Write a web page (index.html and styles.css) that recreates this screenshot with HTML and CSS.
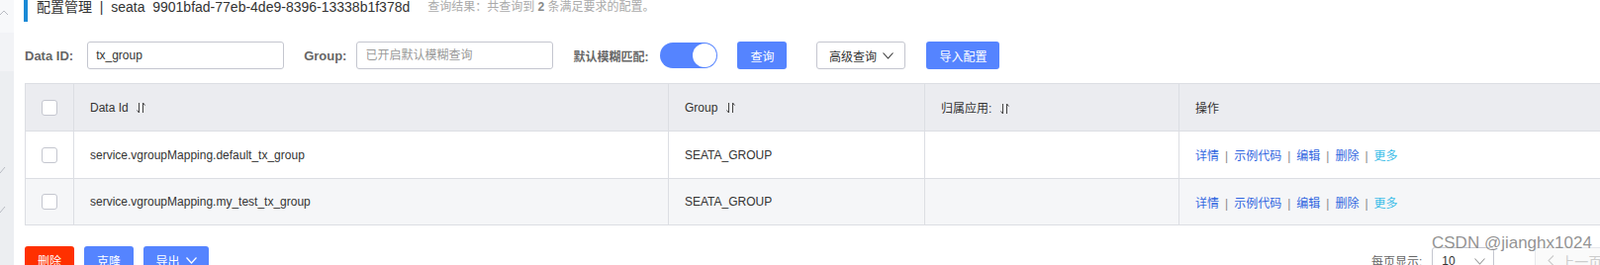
FILE: index.html
```html
<!DOCTYPE html>
<html lang="zh-CN">
<head>
  <meta charset="UTF-8">
  <title>配置管理</title>
  <link rel="stylesheet" href="styles.css">
</head>
<body>

<div class="layout">
  <aside class="sidebar">
    <div class="side-top">
      <svg class="side-arrow" width="8" height="6" viewBox="0 0 8 6"><polyline points="0,5 4,1 8,5" fill="none" stroke="#b8bbc2" stroke-width="1"/></svg>
    </div>
    <div class="side-active"></div>
    <div class="side-rest">
      <svg class="side-chev" width="8" height="8" viewBox="0 0 8 8"><polyline points="-4,2 0,7 5,1" fill="none" stroke="#b8bbc2" stroke-width="1"/></svg>
      <svg class="side-chev second" width="8" height="8" viewBox="0 0 8 8"><polyline points="-4,2 0,7 5,1" fill="none" stroke="#b8bbc2" stroke-width="1"/></svg>
    </div>
  </aside>

  <main class="content">
    <div class="page-title">
      <span class="title-text">配置管理 &nbsp;|&nbsp; seata&nbsp; 9901bfad-77eb-4de9-8396-13338b1f378d</span>
      <span class="title-tip">查询结果：共查询到 <strong>2</strong> 条满足要求的配置。</span>
    </div>

    <div class="filter">
      <label class="lbl lbl-data">Data ID:</label>
      <input class="text-input" type="text" value="tx_group">
      <label class="lbl lbl-group">Group:</label>
      <input class="text-input" type="text" placeholder="已开启默认模糊查询">
      <label class="lbl lbl-fuzzy">默认模糊匹配:</label>
      <span class="switch"><span class="knob"></span></span>
      <button class="btn btn-primary btn-search">查询</button>
      <button class="btn btn-normal btn-advanced">高级查询
        <svg width="11" height="7" viewBox="0 0 11 7"><polyline points="0.5,0.5 5.5,6 10.5,0.5" fill="none" stroke="#333" stroke-width="1.1"/></svg>
      </button>
      <button class="btn btn-primary btn-import">导入配置</button>
    </div>

    <table class="grid">
      <colgroup>
        <col class="c-check">
        <col class="c-id">
        <col class="c-group">
        <col class="c-app">
        <col class="c-ops">
      </colgroup>
      <thead>
        <tr>
          <th class="check-cell"><span class="checkbox"></span></th>
          <th>Data Id <svg class="sort" width="9" height="12" viewBox="0 0 9 12"><path d="M2.5 1V11L0.5 8.5M6.5 11V1L8.5 3.5" fill="none" stroke="#444" stroke-width="1"/></svg></th>
          <th>Group <svg class="sort" width="9" height="12" viewBox="0 0 9 12"><path d="M2.5 1V11L0.5 8.5M6.5 11V1L8.5 3.5" fill="none" stroke="#444" stroke-width="1"/></svg></th>
          <th>归属应用: <svg class="sort" width="9" height="12" viewBox="0 0 9 12"><path d="M2.5 1V11L0.5 8.5M6.5 11V1L8.5 3.5" fill="none" stroke="#444" stroke-width="1"/></svg></th>
          <th>操作</th>
        </tr>
      </thead>
      <tbody>
        <tr>
          <td class="check-cell"><span class="checkbox"></span></td>
          <td>service.vgroupMapping.default_tx_group</td>
          <td>SEATA_GROUP</td>
          <td></td>
          <td class="ops"><a>详情</a><span class="sep">|</span><a>示例代码</a><span class="sep">|</span><a>编辑</a><span class="sep">|</span><a>删除</a><span class="sep">|</span><a class="more">更多</a></td>
        </tr>
        <tr class="stripe">
          <td class="check-cell"><span class="checkbox"></span></td>
          <td>service.vgroupMapping.my_test_tx_group</td>
          <td>SEATA_GROUP</td>
          <td></td>
          <td class="ops"><a>详情</a><span class="sep">|</span><a>示例代码</a><span class="sep">|</span><a>编辑</a><span class="sep">|</span><a>删除</a><span class="sep">|</span><a class="more">更多</a></td>
        </tr>
      </tbody>
    </table>

    <div class="footer">
      <div class="batch">
        <button class="btn btn-danger">删除</button>
        <button class="btn btn-primary">克隆</button>
        <button class="btn btn-primary btn-export">导出
          <svg width="11" height="7" viewBox="0 0 11 7"><polyline points="0.5,0.5 5.5,6 10.5,0.5" fill="none" stroke="#fff" stroke-width="1.2"/></svg>
        </button>
      </div>
      <div class="pager">
        <span class="page-size-label">每页显示:</span>
        <span class="page-size">10
          <svg width="11" height="7" viewBox="0 0 11 7"><polyline points="0.5,0.5 5.5,6 10.5,0.5" fill="none" stroke="#999" stroke-width="1.1"/></svg>
        </span>
        <span class="page-btn disabled">
          <svg width="7" height="11" viewBox="0 0 7 11"><polyline points="6,0.5 1,5.5 6,10.5" fill="none" stroke="#ccc" stroke-width="1.1"/></svg>
          上一页
        </span>
      </div>
    </div>
  </main>
</div>

<div class="watermark">CSDN @jianghx1024</div>

</body>
</html>
```

FILE: styles.css
```css
body {
  margin: 0;
  font-family: "Liberation Sans", "Noto Sans CJK SC", sans-serif;
  font-size: 12px;
  color: #333;
  background: #fff;
  overflow: hidden;
  height: 268px;
}
.layout {
  display: flex;
  align-items: flex-start;
}
.sidebar {
  flex: none;
  width: 14px;
  height: 268px;
  display: flex;
  flex-direction: column;
  overflow: hidden;
}
.side-top {
  height: 33px;
  background: #f7f8fa;
}
.side-arrow {
  display: block;
  margin: 10px 0 0 0;
}
.side-active {
  height: 39px;
  background: #f2f3f6;
}
.side-rest {
  flex: 1;
  background: #eceef1;
}
.side-chev {
  display: block;
  margin-top: 96px;
}
.side-chev.second {
  margin-top: 32px;
}
.content {
  flex: none;
  width: 1722px;
  padding-left: 11px;
}
.page-title {
  margin-top: -8px;
  margin-left: -1px;
  height: 30px;
  line-height: 28px;
  border-left: 4px solid #1a8ad6;
  padding-left: 9px;
  display: flex;
  align-items: center;
}
.title-text {
  font-size: 14px;
  color: #333;
}
.title-tip {
  margin-left: 18px;
  color: #aaa;
  font-size: 12px;
}
.title-tip strong {
  color: #888;
}
.filter {
  margin-top: 20px;
  height: 28px;
  display: flex;
  align-items: center;
}
.lbl {
  font-weight: bold;
  color: #666;
  white-space: nowrap;
}
.lbl-data {
  font-size: 13px;
  margin-right: 14px;
}
.lbl-group {
  font-size: 13px;
  margin-left: 20px;
  margin-right: 10px;
}
.lbl-fuzzy {
  margin-left: 20px;
  margin-right: 12px;
}
.text-input {
  box-sizing: border-box;
  width: 199px;
  height: 28px;
  border: 1px solid #c4c6cf;
  border-radius: 3px;
  padding: 0 8px;
  font-family: inherit;
  font-size: 12px;
  color: #333;
  outline: none;
}
.text-input::placeholder {
  color: #999;
}
.switch {
  width: 58px;
  height: 26px;
  border-radius: 13px;
  background: #5584ff;
  display: flex;
  align-items: center;
  justify-content: flex-end;
  box-sizing: border-box;
  padding-right: 1px;
}
.knob {
  width: 24px;
  height: 24px;
  border-radius: 50%;
  background: #fff;
}
.btn {
  box-sizing: border-box;
  height: 28px;
  padding: 0;
  border: 1px solid transparent;
  border-radius: 3px;
  font-family: inherit;
  font-size: 12px;
  display: inline-flex;
  align-items: center;
  justify-content: center;
  gap: 6px;
  white-space: nowrap;
  cursor: pointer;
}
.btn-primary {
  background: #5584ff;
  color: #fff;
}
.btn-normal {
  background: #fff;
  border-color: #c4c6cf;
  color: #333;
}
.btn-danger {
  background: #ff3000;
  color: #fff;
}
.btn-search {
  margin-left: 20px;
  width: 50px;
}
.btn-advanced {
  margin-left: 30px;
  width: 90px;
}
.btn-import {
  margin-left: 21px;
  width: 74px;
}
.grid {
  margin-top: 14px;
  width: 1711px;
  table-layout: fixed;
  border-collapse: collapse;
}
.c-check { width: 49px; }
.c-id { width: 601px; }
.c-group { width: 259px; }
.c-app { width: 257px; }
.grid th,
.grid td {
  border: 1px solid #dcdee3;
  height: 47px;
  padding: 0 16px;
  text-align: left;
  font-weight: normal;
  color: #333;
  white-space: nowrap;
}
.grid th {
  background: #ebecf0;
  height: 47px;
}
.grid tbody tr:last-child td {
  height: 46px;
}
.grid .check-cell {
  padding: 0;
  text-align: center;
}
.stripe td {
  background: #f5f6f8;
}
.checkbox {
  display: inline-block;
  vertical-align: middle;
  box-sizing: border-box;
  width: 16px;
  height: 16px;
  border: 1px solid #c4c6cf;
  border-radius: 3px;
  background: #fff;
}
.sort {
  vertical-align: -2px;
  margin-left: 5px;
}
.ops a {
  color: #3166e0;
}
.ops a.more {
  color: #3bbde8;
}
.sep {
  margin: 0 6px;
  color: #888;
}
.footer {
  margin-top: 21px;
  display: flex;
  align-items: flex-start;
  justify-content: space-between;
}
.batch {
  display: flex;
  gap: 10px;
}
.batch .btn {
  width: 50px;
}
.batch .btn-export {
  width: 66px;
}
.pager {
  display: flex;
  align-items: center;
  width: 361px;
}
.page-size-label {
  color: #666;
  margin-right: 10px;
}
.page-size {
  box-sizing: border-box;
  width: 63px;
  height: 28px;
  border: 1px solid #c4c6cf;
  border-radius: 3px;
  padding: 0 8px 0 9px;
  display: flex;
  align-items: center;
  justify-content: space-between;
  color: #333;
  margin-top: 1px;
}
.page-btn {
  box-sizing: border-box;
  margin-left: 41px;
  height: 28px;
  width: 90px;
  border: 1px solid #e6e7eb;
  border-radius: 3px;
  background: #fafafa;
  display: flex;
  align-items: center;
  gap: 6px;
  padding-left: 12px;
  color: #ccc;
  font-size: 14px;
}
.watermark {
  position: absolute;
  left: 1447px;
  top: 236px;
  font-size: 17px;
  color: rgba(110, 110, 110, 0.75);
  text-shadow: 0 0 2px #fff;
}
```
